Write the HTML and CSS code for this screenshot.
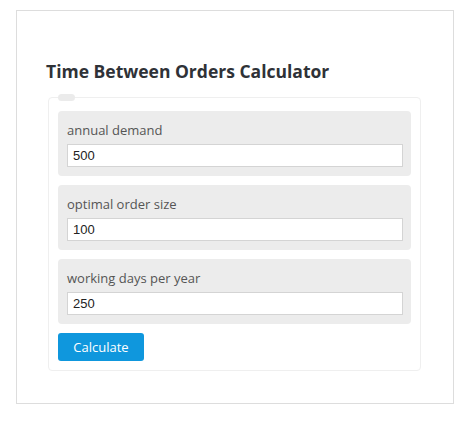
FILE: index.html
```html
<!DOCTYPE html>
<html lang="en">
<head>
    <meta charset="UTF-8">
    <meta name="viewport" content="width=device-width, initial-scale=1.0">
    <title>Time Between Orders Calculator</title>
    <link rel="stylesheet" href="styles.css">
</head>
<body>
    <div class="card">
        <h2>Time Between Orders Calculator</h2>
        <form id="calcForm">
            <fieldset>
                <legend></legend>
                <div class="form-group">
                    <label for="demand">annual demand</label>
                    <input type="text" id="demand" name="demand" value="500">
                </div>
                <div class="form-group">
                    <label for="orderSize">optimal order size</label>
                    <input type="text" id="orderSize" name="orderSize" value="100">
                </div>
                <div class="form-group">
                    <label for="workDays">working days per year</label>
                    <input type="text" id="workDays" name="workDays" value="250">
                </div>
                <button type="button">Calculate</button>
            </fieldset>
        </form>
    </div>
</body>
</html>
```

FILE: styles.css
```css
body {
    margin: 0;
    padding: 0;
    background: #fff;
    font-family: "Open Sans", Arial, sans-serif;
    color: #333;
}
.card {
    box-sizing: border-box;
    width: 438px;
    height: 394px;
    margin: 10px 0 0 16px;
    padding: 48px 32px 0 29px;
    border: 1px solid #ddd;
}
.card h2 {
    margin: 0 0 11px;
    font-size: 17.5px;
    line-height: 24px;
    font-weight: 700;
    color: #2f3237;
}
fieldset {
    margin: 0 0 0 2px;
    padding: 10px 9px 9px 9px;
    border: 1px solid #efefef;
    border-radius: 4px;
}
legend {
    width: 17px;
    height: 7px;
    padding: 0;
    background: #ebebeb;
    border-radius: 4px;
}
.form-group {
    margin-bottom: 9px;
    padding: 10px 8px 9px 9px;
    background: #ececec;
    border-radius: 4px;
}
.form-group label {
    display: block;
    margin-bottom: 5px;
    font-size: 13px;
    line-height: 18px;
    color: #555;
}
.form-group input {
    display: block;
    box-sizing: border-box;
    width: 100%;
    height: 23px;
    padding: 0 5px;
    border: 1px solid #d4d4d4;
    background: #fff;
    font-family: "Liberation Sans", Arial, sans-serif;
    font-size: 13px;
    color: #222;
}
button {
    width: 86px;
    height: 28px;
    padding: 0;
    border: none;
    border-radius: 3px;
    background: #0f97dd;
    color: #fff;
    font-family: "Open Sans", Arial, sans-serif;
    font-size: 13px;
    cursor: pointer;
}
```
